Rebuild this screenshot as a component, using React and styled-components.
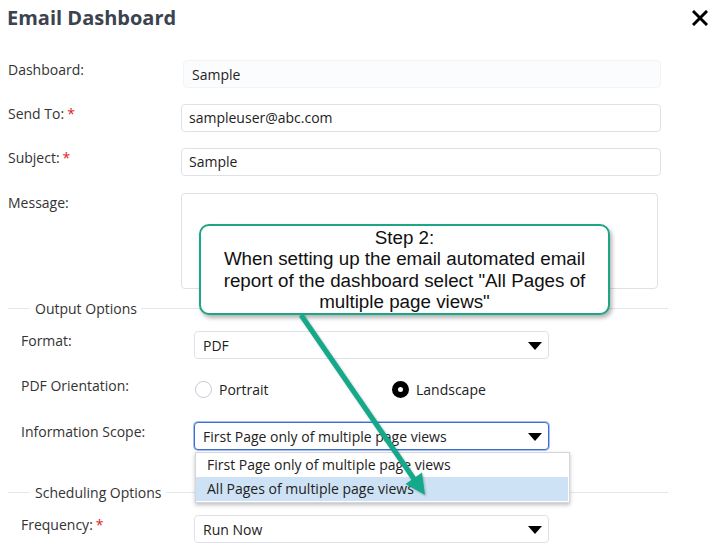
import React from "react";
import styled, { createGlobalStyle } from "styled-components";

const GlobalStyle = createGlobalStyle`
  html, body {
    margin: 0;
    padding: 0;
    background: #fff;
  }
  body {
    font-family: "Open Sans", "Noto Sans", sans-serif;
    color: #333;
  }
`;

const Page = styled.div`
  position: relative;
  width: 719px;
  height: 553px;
  overflow: hidden;
  background: #fff;
`;

const Header = styled.div`
  display: flex;
  align-items: center;
  justify-content: space-between;
  padding: 4px 11px 0 7px;
  height: 28px;
`;

const Title = styled.h1`
  margin: 0;
  font-size: 20px;
  line-height: 28px;
  font-weight: 700;
  color: #3c4350;
`;

const CloseBtn = styled.button`
  border: 0;
  background: none;
  padding: 0;
  width: 16px;
  height: 16px;
  display: flex;
  cursor: pointer;
`;

const Form = styled.div`
  display: flex;
  flex-direction: column;
  padding: 0 51px 0 8px;
`;

const Row = styled.div`
  display: flex;
  align-items: flex-start;
  margin-top: ${(p) => p.$mt || 0}px;
  padding-left: ${(p) => (p.$inset ? 13 : 0)}px;
`;

const Label = styled.div`
  width: 173px;
  flex-shrink: 0;
  font-size: 14px;
  line-height: 20px;
  color: #333;
`;

const Star = styled.span`
  color: #e01b1b;
  margin-left: 3px;
`;

const ReadOnly = styled.div`
  box-sizing: border-box;
  margin-left: 2px;
  width: 478px;
  height: 28px;
  padding: 4px 8px;
  font-size: 14px;
  line-height: 19px;
  color: #222;
  background: #fbfcfd;
  border: 1px solid #f2f4f7;
  border-radius: 4px;
`;

const TextBox = styled.div`
  box-sizing: border-box;
  width: ${(p) => p.$w || 480}px;
  height: ${(p) => p.$h || 28}px;
  padding: 3px 7px;
  font-size: 14px;
  line-height: 20px;
  color: #222;
  background: #fff;
  border: 1px solid #dde2ea;
  border-radius: 4px;
`;

const SectionHead = styled.div`
  display: flex;
  align-items: center;
  height: 20px;
  font-size: 14px;
  color: #333;
  margin-top: ${(p) => p.$mt || 0}px;

  &::before {
    content: "";
    width: 22px;
    height: 1px;
    background: #e3e7ee;
    margin-right: 5px;
  }
  &::after {
    content: "";
    flex: 1;
    height: 1px;
    background: #e3e7ee;
    margin-left: 4px;
  }
`;

const SelectWrap = styled.div`
  position: relative;
`;

const Select = styled.div`
  box-sizing: border-box;
  display: flex;
  align-items: center;
  justify-content: space-between;
  width: 355px;
  height: 28px;
  padding: 0 6px 0 8px;
  font-size: 14px;
  color: #222;
  background: #fff;
  border: 1px solid ${(p) => (p.$focus ? "#3d6fd3" : "#dde2ea")};
  border-radius: 4px;
  box-shadow: ${(p) => (p.$focus ? "0 0 0 1px rgba(61,111,211,0.45)" : "none")};
`;

const Caret = styled.span`
  width: 0;
  height: 0;
  border-left: 7px solid transparent;
  border-right: 7px solid transparent;
  border-top: 8px solid #000;
  margin-top: 1px;
`;

const Menu = styled.div`
  position: absolute;
  left: 1px;
  top: 30px;
  width: 375px;
  box-sizing: border-box;
  background: #fff;
  border: 1px solid #d3d6db;
  box-shadow: 0 2px 4px rgba(0, 0, 0, 0.25);
  padding: 0 1px 1px 0;
  z-index: 2;
`;

const MenuItem = styled.div`
  height: 24px;
  line-height: 24px;
  padding-left: 11px;
  font-size: 14px;
  color: #222;
  background: ${(p) => (p.$active ? "#cde2f5" : "transparent")};
`;

const RadioGroup = styled.div`
  display: flex;
  align-items: center;
  height: 28px;
`;

const RadioOption = styled.label`
  display: flex;
  align-items: center;
  width: ${(p) => p.$w || "auto"};
  font-size: 14px;
  color: #222;
  gap: 7px;
  margin-left: 1px;
  margin-top: -2px;
`;

const RadioDot = styled.span`
  box-sizing: border-box;
  width: 17px;
  height: 17px;
  border-radius: 50%;
  border: ${(p) => (p.$checked ? "6px solid #000" : "1px solid #c4cad5")};
  background: #fff;
`;

const Callout = styled.div`
  position: absolute;
  left: 199px;
  top: 224px;
  width: 411px;
  height: 91px;
  box-sizing: border-box;
  padding: 1px 6px 0;
  background: #fff;
  border: 2px solid #1ea585;
  border-radius: 10px;
  box-shadow: 2px 3px 4px rgba(0, 0, 0, 0.3);
  font-family: "Liberation Sans", Arial, sans-serif;
  font-size: 18.8px;
  line-height: 21.3px;
  color: #111;
  text-align: center;
  z-index: 3;
`;

const ArrowLayer = styled.svg`
  position: absolute;
  left: 0;
  top: 0;
  pointer-events: none;
  z-index: 4;
  filter: drop-shadow(1px 1px 1px rgba(0, 0, 0, 0.25));
`;

const App = () => {
  return (
    <Page>
      <GlobalStyle />
      <Header>
        <Title>Email Dashboard</Title>
        <CloseBtn aria-label="Close">
          <svg width="16" height="16" viewBox="0 0 16 16">
            <path d="M2 2 L14 14 M14 2 L2 14" stroke="#000" strokeWidth="3" strokeLinecap="square" />
          </svg>
        </CloseBtn>
      </Header>

      <Form>
        <Row $mt={28}>
          <Label>Dashboard:</Label>
          <ReadOnly>Sample</ReadOnly>
        </Row>
        <Row $mt={16}>
          <Label>
            Send To:<Star>*</Star>
          </Label>
          <TextBox>sampleuser@abc.com</TextBox>
        </Row>
        <Row $mt={16}>
          <Label>
            Subject:<Star>*</Star>
          </Label>
          <TextBox>Sample</TextBox>
        </Row>
        <Row $mt={17}>
          <Label>Message:</Label>
          <TextBox $w={477} $h={96} />
        </Row>

        <SectionHead $mt={9}>Output Options</SectionHead>
        <Row $mt={13} $inset>
          <Label>Format:</Label>
          <Select>
            PDF
            <Caret />
          </Select>
        </Row>
        <Row $mt={17} $inset>
          <Label>PDF Orientation:</Label>
          <RadioGroup>
            <RadioOption $w="196px">
              <RadioDot />
              Portrait
            </RadioOption>
            <RadioOption>
              <RadioDot $checked />
              Landscape
            </RadioOption>
          </RadioGroup>
        </Row>
        <Row $mt={18} $inset>
          <Label>Information Scope:</Label>
          <SelectWrap>
            <Select $focus>
              First Page only of multiple page views
              <Caret />
            </Select>
            <Menu>
              <MenuItem>First Page only of multiple page views</MenuItem>
              <MenuItem $active>All Pages of multiple page views</MenuItem>
            </Menu>
          </SelectWrap>
        </Row>

        <SectionHead $mt={32}>Scheduling Options</SectionHead>
        <Row $mt={13} $inset>
          <Label>
            Frequency:<Star>*</Star>
          </Label>
          <Select>
            Run Now
            <Caret />
          </Select>
        </Row>
      </Form>

      <Callout>
        Step 2:
        <br />
        When setting up the email automated email report of the dashboard select "All Pages of
        multiple page views"
      </Callout>

      <ArrowLayer width="719" height="553" viewBox="0 0 719 553">
        <line x1="301" y1="315" x2="414" y2="479" stroke="#13a98a" strokeWidth="5" />
        <polygon points="425,495 405.5,484 422,472.5" fill="#13a98a" />
      </ArrowLayer>
    </Page>
  );
};

export default App;
